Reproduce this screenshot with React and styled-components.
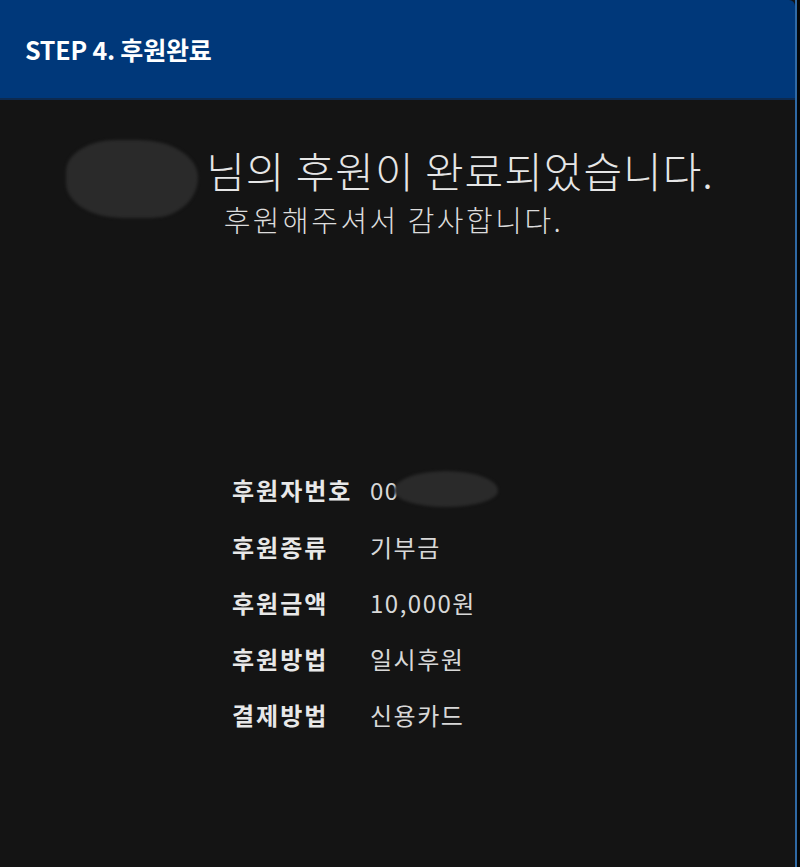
import React from "react";
import styled, { createGlobalStyle } from "styled-components";

const Global = createGlobalStyle`
  html, body { margin: 0; padding: 0; background: #050708; }
  body { font-family: "Noto Sans CJK KR", "Noto Sans", sans-serif; }
`;

const Frame = styled.div`
  width: 795px;
  height: 867px;
  background: #141414;
  border-right: 2px solid #2f6aa6;
  box-sizing: content-box;
  display: flex;
  flex-direction: column;
`;

const Header = styled.header`
  height: 98px;
  flex: none;
  background: #00387a;
  border-bottom: 2px solid #0d2a4f;
  border-top-right-radius: 6px;
  display: flex;
  align-items: center;
  padding-left: 25px;
`;

const HeaderTitle = styled.h1`
  margin: 0;
  color: #ffffff;
  font-size: 25px;
  font-weight: 700;
  letter-spacing: -0.2px;
  line-height: 1;
`;

const Message = styled.section`
  display: flex;
  flex-direction: column;
  align-items: center;
  padding: 45px 15px 0 0;
`;

const TitleRow = styled.div`
  display: flex;
  align-items: flex-start;
  gap: 8px;
`;

const Redact = styled.span`
  display: inline-block;
  flex: none;
  width: ${(p) => p.$w}px;
  height: ${(p) => p.$h}px;
  background: #2a2a2a;
  border-radius: ${(p) => p.$r};
  filter: blur(1.5px);
`;

const NameRedact = styled(Redact)`
  margin: -5px 0 -23px 0;
`;

const NumberRedact = styled(Redact)`
  margin-left: -6px;
`;

const Title = styled.p`
  margin: 0;
  color: #e6e6e6;
  font-size: 42px;
  font-weight: 300;
  line-height: 50px;
  letter-spacing: 1px;
  white-space: nowrap;
`;

const Sub = styled.p`
  margin: 5px 0 0 7px;
  color: #dcdcdc;
  font-size: 29px;
  font-weight: 300;
  line-height: 38px;
  letter-spacing: 2.5px;
  white-space: nowrap;
`;

const InfoGrid = styled.dl`
  margin: 233px 0 0 232px;
  display: grid;
  grid-template-columns: 138px auto;
  row-gap: 23px;
  align-items: center;
`;

const Label = styled.dt`
  color: #e8e8e8;
  font-size: 24px;
  font-weight: 700;
  line-height: 33px;
  letter-spacing: 2px;
  white-space: nowrap;
`;

const Value = styled.dd`
  margin: 0;
  color: #d8d8d8;
  font-size: 24px;
  font-weight: 400;
  line-height: 33px;
  letter-spacing: 1.5px;
  display: flex;
  align-items: center;
  white-space: nowrap;
`;

const rows = [
  ["후원종류", "기부금"],
  ["후원금액", "10,000원"],
  ["후원방법", "일시후원"],
  ["결제방법", "신용카드"],
];

export default function App() {
  return (
    <>
      <Global />
      <Frame>
        <Header>
          <HeaderTitle>STEP 4. 후원완료</HeaderTitle>
        </Header>
        <Message>
          <TitleRow>
            <NameRedact $w={132} $h={78} $r="38% 45% 35% 42% / 40% 48% 52% 45%" />
            <Title>님의 후원이 완료되었습니다.</Title>
          </TitleRow>
          <Sub>후원해주셔서 감사합니다.</Sub>
        </Message>
        <InfoGrid>
          <Label>후원자번호</Label>
          <Value>
            00
            <NumberRedact $w={104} $h={36} $r="50% 50% 50% 50% / 55% 55% 45% 45%" />
          </Value>
          {rows.map(([k, v]) => (
            <React.Fragment key={k}>
              <Label>{k}</Label>
              <Value>{v}</Value>
            </React.Fragment>
          ))}
        </InfoGrid>
      </Frame>
    </>
  );
}
